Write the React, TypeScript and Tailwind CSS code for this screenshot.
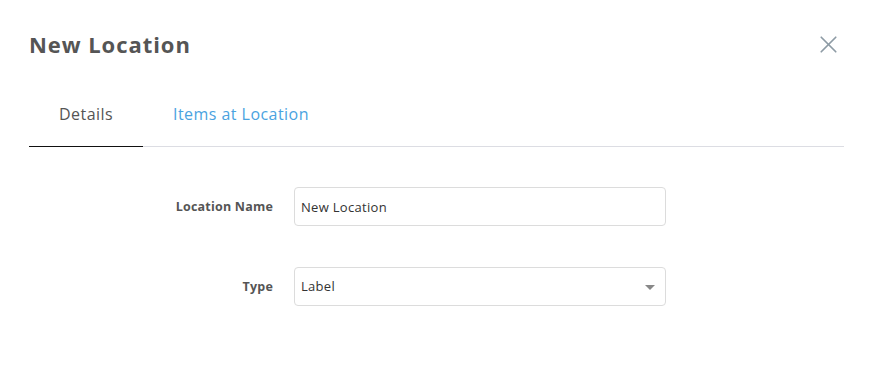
import { X } from "lucide-react";

export default function App() {
  return (
    <div className="w-[873px] h-[385px] bg-white font-['Open_Sans',sans-serif] text-[#555]">
      <div className="px-[29px] pt-[29px]">
        {/* header */}
        <div className="flex items-center justify-between h-[30px]">
          <h1 className="text-[22px] font-bold text-[#555] tracking-[0.95px]">New Location</h1>
          <button className="mr-[1px] text-[#8e9ba5]">
            <X size={29} strokeWidth={1.4} />
          </button>
        </div>

        {/* tabs */}
        <div className="mt-[43px] flex border-b border-[#dcdde3] w-[815px]">
          <div className="px-[30px] pb-[20px] -mb-px border-b border-[#111] text-[16px] tracking-[0.45px] text-[#555]">Details</div>
          <div className="px-[30px] pb-[20px] text-[16px] tracking-[0.45px] text-[#4aa3df]">Items at Location</div>
        </div>

        {/* form */}
        <div className="mt-[40px] flex flex-col gap-[41px]">
          <div className="flex items-center">
            <label className="w-[265px] pr-[21px] pt-[2px] text-right text-[12.5px] font-bold tracking-[0.2px] text-[#555]">Location Name</label>
            <input
              defaultValue="New Location"
              className="w-[372px] h-[39px] px-[6px] rounded-[4px] border border-[#dcdcdc] text-[13px] tracking-[0.3px] text-[#333] outline-none"
            />
          </div>
          <div className="flex items-center">
            <label className="w-[265px] pr-[21px] pt-[2px] text-right text-[12.5px] font-bold tracking-[0.2px] text-[#555]">Type</label>
            <div className="relative w-[372px] h-[39px] rounded-[4px] border border-[#dcdcdc] flex items-center px-[6px] text-[13px] tracking-[0.3px] text-[#333]">
              Label
              <span className="absolute right-[10px] top-[17px] w-0 h-0 border-l-[5px] border-r-[5px] border-t-[5px] border-l-transparent border-r-transparent border-t-[#888]" />
            </div>
          </div>
        </div>
      </div>
    </div>
  );
}
